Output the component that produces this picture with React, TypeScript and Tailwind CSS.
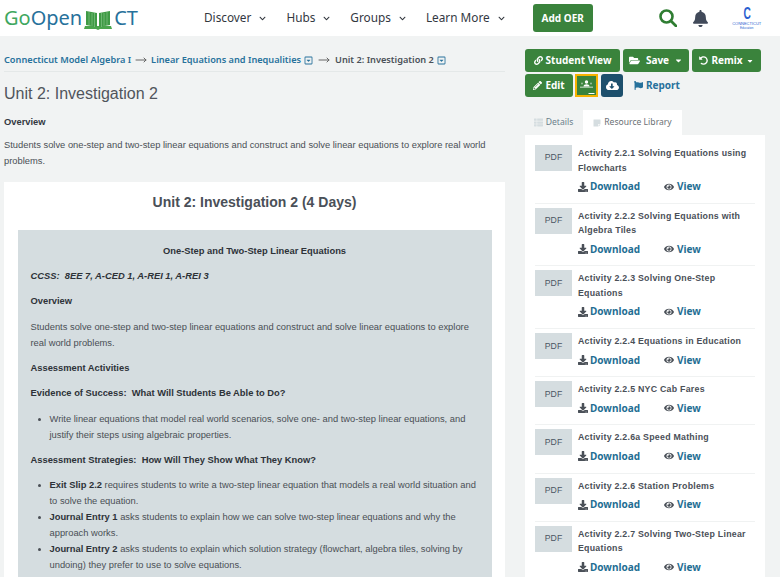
import { MoveRight } from 'lucide-react'
import { FaBell, FaCaretDown, FaChevronDown, FaCloudDownloadAlt, FaDownload, FaEye, FaFlag, FaFolderOpen, FaLink, FaPencilAlt, FaRegCaretSquareDown, FaUndoAlt, FaThList, FaStickyNote } from 'react-icons/fa'

const NAV = ['Discover', 'Hubs', 'Groups', 'Learn More']

const RESOURCES = [
  { title: ['Activity 2.2.1 Solving Equations using', 'Flowcharts'] },
  { title: ['Activity 2.2.2 Solving Equations with', 'Algebra Tiles'] },
  { title: ['Activity 2.2.3 Solving One-Step', 'Equations'] },
  { title: ['Activity 2.2.4 Equations in Education'] },
  { title: ['Activity 2.2.5 NYC Cab Fares'] },
  { title: ['Activity 2.2.6a Speed Mathing'] },
  { title: ['Activity 2.2.6 Station Problems'] },
  { title: ['Activity 2.2.7 Solving Two-Step Linear', 'Equations'] },
]

function Logo() {
  return (
    <div className="flex items-center text-[20px] leading-none font-['Noto_Sans',sans-serif]">
      <span className="text-[#3fa75f]">Go</span>
      <span className="text-[#27719b]">Open</span>
      <svg width="28" height="20" viewBox="0 0 28 20" className="mx-[2px] mt-[3px]">
        <path d="M0 19h12l2 1 2-1h12l-1-3H1z" fill="#4aa54d" />
        <path d="M2 1l11 2v14L2 15z" fill="#3f9a45" />
        <path d="M26 1L15 3v14l11-2z" fill="#3f9a45" />
        <path d="M5 2v13M8 3v13M10.5 3v14M17.5 3v14M20 3v13M23 2v13" stroke="#8fcb92" strokeWidth="0.6" />
      </svg>
      <span className="text-[#27719b]">CT</span>
    </div>
  )
}

function GreenButton({ children, className = '' }: { children: React.ReactNode; className?: string }) {
  return (
    <div className={`flex h-[23px] items-center justify-center gap-[3px] rounded-[3px] bg-[#3a833c] text-[10px] font-bold text-white ${className}`}>
      {children}
    </div>
  )
}

function ResourceRow({ title, last }: { title: string[]; last: boolean }) {
  return (
    <div className={`flex gap-[6px] pt-[4px] pb-[6.2px] ${last ? '' : 'border-b border-[#f0f2f2]'}`}>
      <div className="flex h-[26px] w-[37px] shrink-0 items-center justify-center bg-[#d5dde0] text-[8.7px] text-[#4b5563]">PDF</div>
      <div className="min-w-0 flex-1 pt-[1px]">
        <div className="text-[8.8px] leading-[14.5px] font-bold tracking-[0.25px] whitespace-nowrap text-[#4a5058]">
          {title.map((line) => (
            <div key={line}>{line}</div>
          ))}
        </div>
        <div className="mt-[1.5px] flex h-[20px] items-center font-['Noto_Sans',sans-serif] text-[10px] font-bold text-[#1f6e93]">
          <div className="flex w-[86px] items-center gap-[2px]">
            <FaDownload size={10} className="text-[#4a5058]" />
            <span>Download</span>
          </div>
          <div className="flex items-center gap-[2px]">
            <FaEye size={10} className="text-[#4a5058]" />
            <span className="ml-px">View</span>
          </div>
        </div>
      </div>
    </div>
  )
}

export default function App() {
  return (
    <div className="h-[577px] w-[780px] overflow-hidden bg-[#f1f3f3] font-['Liberation_Sans',sans-serif] text-[#4a4f55]">
      {/* Top nav */}
      <div className="flex h-[36px] items-center bg-white pl-[4px]">
        <Logo />
        <div className="ml-[66px] flex font-['Noto_Sans',sans-serif] text-[11.8px] whitespace-nowrap text-[#33383f]">
          {NAV.map((item, i) => (
            <div key={item} className={`flex items-center gap-[8px] ${i === 3 ? '' : 'mr-[20px]'}`}>
              <span>{item}</span>
              <FaChevronDown size={7} />
            </div>
          ))}
        </div>
        <div className="ml-[28px] flex h-[28px] w-[60px] shrink-0 items-center justify-center rounded-[3px] bg-[#3a833c] font-['Noto_Sans',sans-serif] text-[10px] font-bold text-white">
          Add OER
        </div>
        <svg width="18" height="18" viewBox="0 0 18 18" fill="none" className="ml-[66px] shrink-0">
          <circle cx="7.5" cy="7.5" r="6" stroke="#2f7d32" strokeWidth="2.6" />
          <path d="M12 12l5 5" stroke="#2f7d32" strokeWidth="2.8" strokeLinecap="round" />
        </svg>
        <FaBell size={17} className="ml-[15px] shrink-0 text-[#414a5a]" />
        <div className="ml-[24px] flex w-[28px] shrink-0 flex-col items-center">
          <span className="scale-x-[0.6] text-[17px] leading-[14px] font-bold text-[#2a5fd0]">C</span>
          <span className="text-[4px] leading-[5px] text-[#2a5fd0]">CONNECTICUT</span>
          <span className="text-[3px] leading-[4px] text-[#2a5fd0]">Education</span>
        </div>
      </div>

      <div className="flex">
        {/* Left column */}
        <div className="w-[505px] shrink-0 pl-[4px]">
          <div className="flex h-[36px] items-center border-b border-[#e4e8e8] pt-[16px] pb-[3px] font-['Noto_Sans',sans-serif] text-[9.2px] font-semibold whitespace-nowrap">
            <span className="text-[#27719b]">Connecticut Model Algebra I</span>
            <MoveRight size={12} className="mx-[4px] text-[#666]" />
            <span className="text-[#27719b]">Linear Equations and Inequalities</span>
            <FaRegCaretSquareDown size={9} className="ml-[3px] text-[#27719b]" />
            <MoveRight size={12} className="mx-[5px] text-[#666]" />
            <span className="text-[#4a5058]">Unit 2: Investigation 2</span>
            <FaRegCaretSquareDown size={9} className="ml-[3px] text-[#27719b]" />
          </div>
          <h1 className="mt-[10px] text-[16px] leading-[24px] text-[#50555c]">Unit 2: Investigation 2</h1>
          <p className="mt-[8px] text-[9.35px] leading-[16px] font-bold text-[#33383f]">Overview</p>
          <p className="mt-[7px] w-[490px] text-[9.35px] leading-[16px]">
            Students solve one-step and two-step linear equations and construct and solve linear equations to explore real world problems.
          </p>

          <div className="mt-[12.5px] bg-white px-[13.5px] pt-[11px]">
            <h2 className="text-center text-[14px] leading-[18px] font-bold text-[#4a5058]">Unit 2: Investigation 2 (4 Days)</h2>
            <div className="mt-[19px] bg-[#d5dde0] px-[13px] pt-[13px] pb-[16px] text-[9.35px] leading-[16px]">
              <p className="text-center font-bold text-[#2d3238]">One-Step and Two-Step Linear Equations</p>
              <p className="mt-[9.35px] font-bold text-[#2d3238] italic">CCSS:&nbsp; 8EE 7, A-CED 1, A-REI 1, A-REI 3</p>
              <p className="mt-[9.35px] font-bold text-[#2d3238]">Overview</p>
              <p className="mt-[9.35px]">
                Students solve one-step and two-step linear equations and construct and solve linear equations to explore real world problems.
              </p>
              <p className="mt-[9.35px] font-bold text-[#2d3238]">Assessment Activities</p>
              <p className="mt-[9.35px] font-bold text-[#2d3238]">Evidence of Success:&nbsp; What Will Students Be Able to Do?</p>
              <ul className="mt-[9.35px] list-disc pl-[19px]">
                <li>Write linear equations that model real world scenarios, solve one- and two-step linear equations, and justify their steps using algebraic properties.</li>
              </ul>
              <p className="mt-[9.35px] font-bold text-[#2d3238]">Assessment Strategies:&nbsp; How Will They Show What They Know?</p>
              <ul className="mt-[9.35px] list-disc pl-[19px]">
                <li><b className="text-[#2d3238]">Exit Slip 2.2</b> requires students to write a two-step linear equation that models a real world situation and to solve the equation.</li>
                <li><b className="text-[#2d3238]">Journal Entry 1</b> asks students to explain how we can solve two-step linear equations and why the approach works.</li>
                <li><b className="text-[#2d3238]">Journal Entry 2</b> asks students to explain which solution strategy (flowchart, algebra tiles, solving by undoing) they prefer to use to solve equations.</li>
              </ul>
            </div>
          </div>
        </div>

        {/* Right column */}
        <div className="ml-[20px] w-[240px] shrink-0 pt-[13px] font-['Noto_Sans',sans-serif]">
          <div className="flex gap-[3px]">
            <GreenButton className="w-[95px]"><FaLink size={9} />Student View</GreenButton>
            <GreenButton className="w-[66px]"><FaFolderOpen size={11} className="mr-[3px]" />Save<FaCaretDown size={9} className="ml-[2px]" /></GreenButton>
            <GreenButton className="w-[69px]"><FaUndoAlt size={9} />Remix<FaCaretDown size={8} /></GreenButton>
          </div>
          <div className="mt-[2px] flex items-center">
            <GreenButton className="w-[48px]"><FaPencilAlt size={9} />Edit</GreenButton>
            <div className="ml-[2px] flex h-[23px] w-[23px] items-center justify-center border-2 border-[#f5b301] bg-[#3a833c]">
              <svg width="19" height="19" viewBox="0 0 19 19" fill="white">
                <circle cx="9.5" cy="6" r="1.7" />
                <path d="M6.5 10.5c0-1.5 1.4-2.2 3-2.2s3 .7 3 2.2z" />
                <circle cx="5" cy="7.5" r="1" opacity="0.5" />
                <circle cx="14" cy="7.5" r="1" opacity="0.5" />
                <path d="M3 10.7h13v.8H3zM11.5 17h6v1h-6z" />
              </svg>
            </div>
            <div className="ml-[3px] flex h-[23px] w-[22px] items-center justify-center rounded-[3px] bg-[#1d4f6c] text-white">
              <FaCloudDownloadAlt size={13} />
            </div>
            <div className="ml-[11px] flex items-center gap-[3px] text-[10px] font-bold text-[#27719b]">
              <FaFlag size={9} />Report
            </div>
          </div>
          <div className="mt-[13px] flex h-[25px] text-[8.6px]">
            <div className="flex w-[53px] items-center justify-center gap-[3px] pl-[4px] text-[#6b7f8c]">
              <FaThList size={9} className="text-[#d5dde0]" />Details
            </div>
            <div className="ml-[5px] flex w-[99px] items-center justify-center gap-[3px] bg-white text-[#6b7075]">
              <FaStickyNote size={8} className="text-[#d5dde0]" />Resource Library
            </div>
          </div>
          <div className="bg-white px-[10px] pt-[6px] font-['Liberation_Sans',sans-serif]">
            {RESOURCES.map((r, i) => (
              <ResourceRow key={i} title={r.title} last={i === RESOURCES.length - 1} />
            ))}
          </div>
        </div>
      </div>
    </div>
  )
}
